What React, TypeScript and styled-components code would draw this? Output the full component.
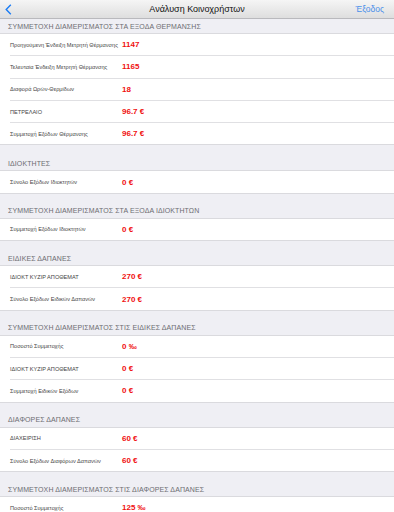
import styled, { createGlobalStyle } from "styled-components";

const GlobalStyle = createGlobalStyle`
  html, body {
    margin: 0;
    padding: 0;
    height: 100%;
    overflow: hidden;
    background: #efeff4;
    font-family: "Liberation Sans", Arial, sans-serif;
  }
`;

const Page = styled.div`
  width: 394px;
  height: 512px;
  overflow: hidden;
  display: flex;
  flex-direction: column;
  background: #efeff4;
`;

const NavBar = styled.div`
  flex: none;
  height: 18px;
  display: grid;
  grid-template-columns: 60px 1fr 60px;
  align-items: center;
  background: linear-gradient(#f5f5f5, #dedede);
  border-bottom: 1px solid #b9b9bd;
`;

const BackButton = styled.div`
  display: flex;
  align-items: center;
  padding-left: 5px;
  color: #1a7cf5;
`;

const Title = styled.div`
  text-align: center;
  font-size: 9px;
  color: #111;
  padding-bottom: 1px;
`;

const ExitLink = styled.div`
  text-align: right;
  padding-right: 10px;
  font-size: 8.5px;
  color: #4a90ea;
  padding-bottom: 1px;
`;

const SectionHeader = styled.div<{ $height: number }>`
  flex: none;
  height: ${(p) => p.$height}px;
  display: flex;
  align-items: flex-end;
  padding: 0 0 3.5px 8px;
  box-sizing: border-box;
  font-size: 7px;
  letter-spacing: 0.1px;
  color: #6d6d72;
  white-space: nowrap;
`;

const Group = styled.div`
  flex: none;
  background: #fff;
  border-top: 1px solid #dadade;
  border-bottom: 1px solid #dadade;
`;

const Row = styled.div`
  height: 21.3px;
  display: flex;
  align-items: center;
  margin-left: 10px;
  & + & {
    border-top: 1px solid #e0e0e3;
  }
`;

const Label = styled.div`
  width: 112px;
  flex: none;
  font-size: 5.6px;
  color: #444;
  white-space: nowrap;
`;

const Value = styled.div`
  font-size: 8px;
  font-weight: bold;
  color: #f01010;
  white-space: nowrap;
`;

type Section = { title: string; height: number; rows: [string, string][] };

const sections: Section[] = [
  {
    title: "ΣΥΜΜΕΤΟΧΗ ΔΙΑΜΕΡΙΣΜΑΤΟΣ ΣΤΑ ΕΞΟΔΑ ΘΕΡΜΑΝΣΗΣ",
    height: 14,
    rows: [
      ["Προηγούμενη Ένδειξη Μετρητή Θέρμανσης", "1147"],
      ["Τελευταία Ένδειξη Μετρητή Θέρμανσης", "1165"],
      ["Διαφορά Ωρών-Θερμίδων", "18"],
      ["ΠΕΤΡΕΛΑΙΟ", "96.7 €"],
      ["Συμμετοχή Εξόδων Θέρμανσης", "96.7 €"],
    ],
  },
  {
    title: "ΙΔΙΟΚΤΗΤΕΣ",
    height: 25,
    rows: [["Σύνολο Εξόδων Ιδιοκτητών", "0 €"]],
  },
  {
    title: "ΣΥΜΜΕΤΟΧΗ ΔΙΑΜΕΡΙΣΜΑΤΟΣ ΣΤΑ ΕΞΟΔΑ ΙΔΙΟΚΤΗΤΩΝ",
    height: 24,
    rows: [["Συμμετοχή Εξόδων Ιδιοκτητών", "0 €"]],
  },
  {
    title: "ΕΙΔΙΚΕΣ ΔΑΠΑΝΕΣ",
    height: 24,
    rows: [
      ["ΙΔΙΟΚΤ ΚΥΖΙΡ ΑΠΟΘΕΜΑΤ", "270 €"],
      ["Σύνολο Εξόδων Ειδικών Δαπανών", "270 €"],
    ],
  },
  {
    title: "ΣΥΜΜΕΤΟΧΗ ΔΙΑΜΕΡΙΣΜΑΤΟΣ ΣΤΙΣ ΕΙΔΙΚΕΣ ΔΑΠΑΝΕΣ",
    height: 24,
    rows: [
      ["Ποσοστό Συμμετοχής", "0 ‰"],
      ["ΙΔΙΟΚΤ ΚΥΖΙΡ ΑΠΟΘΕΜΑΤ", "0 €"],
      ["Συμμετοχή Ειδικών Εξόδων", "0 €"],
    ],
  },
  {
    title: "ΔΙΑΦΟΡΕΣ ΔΑΠΑΝΕΣ",
    height: 24,
    rows: [
      ["ΔΙΑΧΕΙΡΙΣΗ", "60 €"],
      ["Σύνολο Εξόδων Διαφόρων Δαπανών", "60 €"],
    ],
  },
  {
    title: "ΣΥΜΜΕΤΟΧΗ ΔΙΑΜΕΡΙΣΜΑΤΟΣ ΣΤΙΣ ΔΙΑΦΟΡΕΣ ΔΑΠΑΝΕΣ",
    height: 24,
    rows: [["Ποσοστό Συμμετοχής", "125 ‰"]],
  },
];

export default function App() {
  return (
    <Page>
      <GlobalStyle />
      <NavBar>
        <BackButton>
          <svg width="7" height="11" viewBox="0 0 7 11">
            <path d="M5.8 0.8 L1.2 5.5 L5.8 10.2" fill="none" stroke="currentColor" strokeWidth="1.4" />
          </svg>
        </BackButton>
        <Title>Ανάλυση Κοινοχρήστων</Title>
        <ExitLink>Έξοδος</ExitLink>
      </NavBar>
      {sections.map((s) => (
        <div key={s.title} style={{ display: "contents" }}>
          <SectionHeader $height={s.height}>{s.title}</SectionHeader>
          <Group>
            {s.rows.map(([label, value], i) => (
              <Row key={i}>
                <Label>{label}</Label>
                <Value>{value}</Value>
              </Row>
            ))}
          </Group>
        </div>
      ))}
    </Page>
  );
}
